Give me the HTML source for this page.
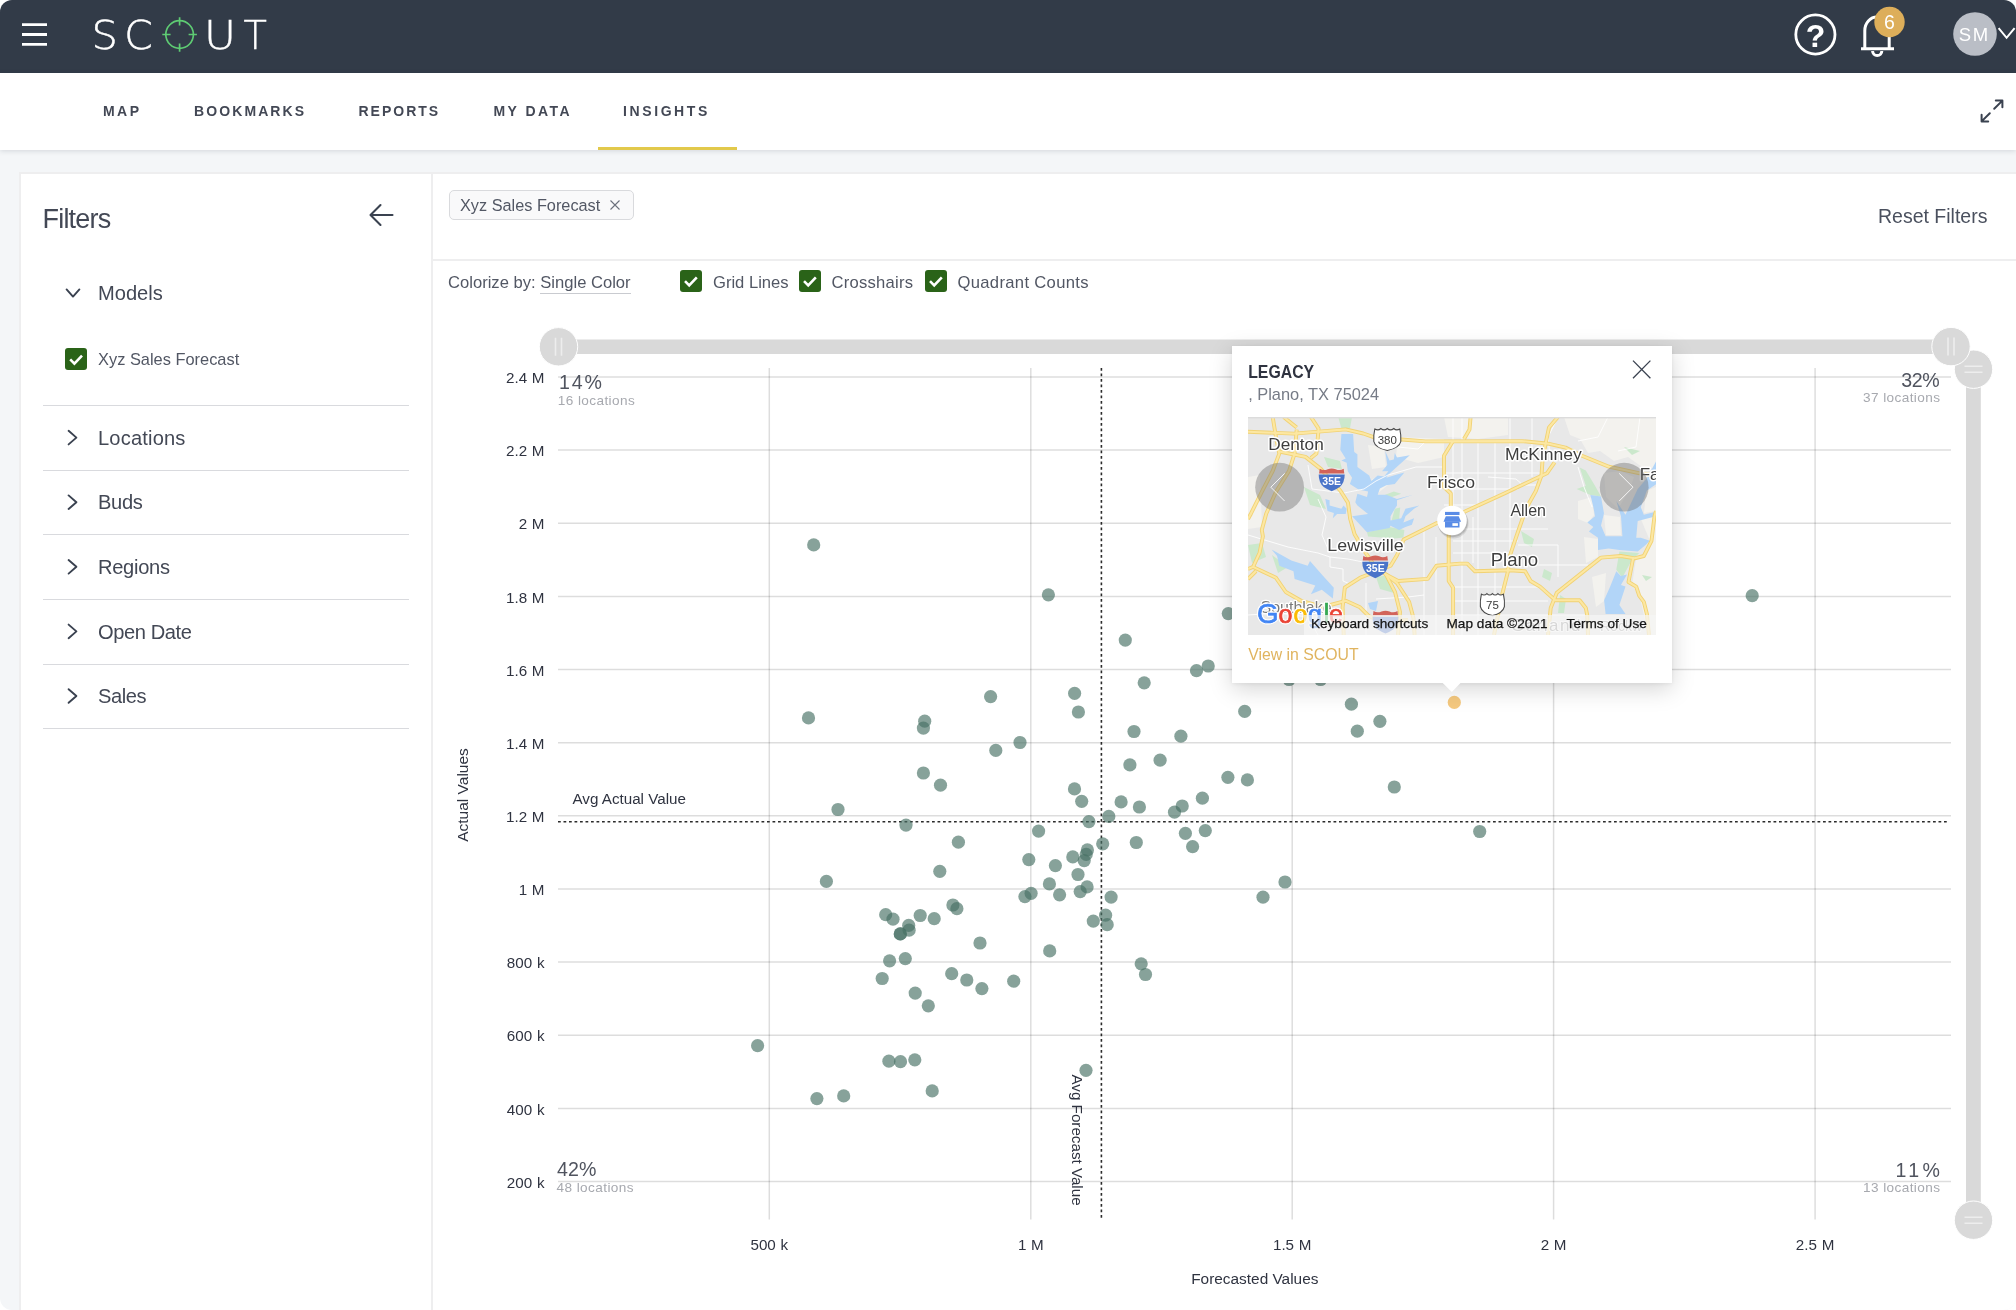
<!DOCTYPE html>
<html lang="en">
<head>
<meta charset="utf-8">
<title>SCOUT Insights</title>
<style>
html,body{margin:0;padding:0;background:#fff;}
body{width:2016px;height:1310px;overflow:hidden;font-family:"Liberation Sans",sans-serif;color:#3b4150;}
#app{position:absolute;left:0;top:0;width:2016px;height:1310px;background:#f4f6f8;border-radius:12px;overflow:hidden;will-change:transform;}
.abs{position:absolute;white-space:nowrap;line-height:1;}
#hdr{position:absolute;left:0;top:0;width:2016px;height:73px;background:#323b48;}
#nav{position:absolute;left:0;top:73px;width:2016px;height:77px;background:#fff;box-shadow:0 1px 5px rgba(40,50,70,.16);}
.nv{position:absolute;top:29.5px;font-weight:700;font-size:14px;letter-spacing:2.45px;color:#434855;line-height:16px;white-space:nowrap;}
#navul{position:absolute;left:598px;top:74px;width:139px;height:3px;background:#e2c94b;}
#lp{position:absolute;left:19px;top:172px;width:410px;height:1150px;background:#fff;border:2px solid #eeeeef;}
#mp{position:absolute;left:431px;top:172px;width:1600px;height:1150px;background:#fff;border:2px solid #eeeeef;}
.sep{position:absolute;left:43px;width:366px;height:1px;background:#d9dade;}
.sec{position:absolute;left:98px;font-size:20.1px;color:#434855;line-height:24px;white-space:nowrap;}
.cb{position:absolute;width:22px;height:22px;border-radius:3px;background:#2a6318;}
.lbl{position:absolute;font-size:16.4px;color:#525764;line-height:20px;white-space:nowrap;}
svg{position:absolute;overflow:visible;}
</style>
</head>
<body>
<div id="app">
<div id="hdr">
<svg width="2016" height="73" viewBox="0 0 2016 73" style="left:0;top:0">
  <g stroke="#fff" stroke-width="2.8" fill="none">
    <path d="M22 24.6H47M22 34.5H47M22 44.3H47"/>
  </g>
  <g font-family="'DejaVu Sans Light','DejaVu Sans',sans-serif" font-weight="200" font-size="38.3" fill="#fff" stroke="#fff" stroke-width=".45">
    <text x="91.6" y="48.7" textLength="26.3" lengthAdjust="spacingAndGlyphs">S</text>
    <text x="124.3" y="48.7" textLength="28.5" lengthAdjust="spacingAndGlyphs">C</text>
    <text x="204.1" y="48.7" textLength="32" lengthAdjust="spacingAndGlyphs">U</text>
    <text x="243.6" y="48.7" textLength="23.4" lengthAdjust="spacingAndGlyphs">T</text>
  </g>
  <g stroke="#5ecb73" stroke-width="1.7" fill="none">
    <circle cx="179.6" cy="34.5" r="13.8"/>
    <path d="M179.6 17.3V25.6M179.6 43.4V51.7M162.3 34.5H170.6M188.6 34.5H196.9"/>
  </g>
  <!-- help -->
  <circle cx="1815.4" cy="34.5" r="19.6" fill="none" stroke="#fff" stroke-width="2.8"/>
  <text x="1815.4" y="46.6" text-anchor="middle" font-family="'Liberation Sans',sans-serif" font-weight="700" font-size="32" fill="#fff">?</text>
  <!-- bell -->
  <g stroke="#fff" stroke-width="3" fill="none">
    <path d="M1864.8 48.8V30.5A12.2 13.6 0 0 1 1889.2 30.5V48.8"/>
    <path d="M1861 48.8H1894"/>
    <path d="M1872.6 51A4.6 4.6 0 0 0 1881.8 51"/>
  </g>
  <circle cx="1889.5" cy="22" r="15.2" fill="#ddae5a"/>
  <text x="1889.5" y="29" text-anchor="middle" font-family="'Liberation Sans',sans-serif" font-size="19.5" fill="#fff">6</text>
  <!-- avatar -->
  <circle cx="1975" cy="34" r="21.8" fill="#babec6"/>
  <text x="1974.2" y="40.6" text-anchor="middle" font-family="'Liberation Sans',sans-serif" font-size="18.5" letter-spacing="1.6" fill="#fff">SM</text>
  <path d="M1998.6 28.2L2006.6 37.8L2014.6 28.2" stroke="#fff" stroke-width="2" fill="none"/>
</svg>
</div>
<div id="nav">
  <div class="nv" style="left:103px">MAP</div>
  <div class="nv" style="left:194px;letter-spacing:2.1px">BOOKMARKS</div>
  <div class="nv" style="left:358.5px;letter-spacing:2px">REPORTS</div>
  <div class="nv" style="left:493.5px">MY DATA</div>
  <div class="nv" style="left:623px;letter-spacing:2.6px">INSIGHTS</div>
  <div id="navul"></div>
  <svg width="26" height="26" viewBox="0 0 26 26" style="left:1979px;top:25px">
    <g stroke="#3a4250" stroke-width="2" fill="none" stroke-linecap="round" stroke-linejoin="round">
      <path d="M15.2 10.8L23.4 2.6M16.8 2.6H23.4V9.2"/>
      <path d="M10.8 15.2L2.6 23.4M2.6 16.8V23.4H9.2"/>
    </g>
  </svg>
</div>
<div id="lp"></div>
<div id="mp"></div>
<div class="abs" style="left:42.5px;top:204px;font-size:27px;letter-spacing:-.8px;line-height:30px;color:#434855">Filters</div>
<svg width="30" height="26" viewBox="0 0 30 26" style="left:366px;top:202px">
  <path d="M26.5 13H5M14.5 3L4.5 13L14.5 23" stroke="#3a4250" stroke-width="2.1" fill="none" stroke-linecap="round" stroke-linejoin="round"/>
</svg>
<svg width="18" height="14" viewBox="0 0 18 14" style="left:64px;top:287px">
  <path d="M2.6 2.4L9 9.6L15.4 2.4" stroke="#3a4250" stroke-width="1.9" fill="none" stroke-linecap="round" stroke-linejoin="round"/>
</svg>
<div class="sec" style="top:281px">Models</div>
<div class="cb" style="left:65px;top:347.5px"><svg width="22" height="22" viewBox="0 0 22 22" style="left:0;top:0"><path d="M5.2 11.4L9.4 15.6L17 7.6" stroke="#fff" stroke-width="2.6" fill="none"/></svg></div>
<div class="lbl" style="left:98px;top:349px">Xyz Sales Forecast</div>
<div class="sep" style="top:405px"></div>
<div class="sep" style="top:469.5px"></div>
<div class="sep" style="top:534px"></div>
<div class="sep" style="top:599px"></div>
<div class="sep" style="top:663.5px"></div>
<div class="sep" style="top:728px"></div>
<div class="sec" style="top:425.5px;letter-spacing:.17px">Locations</div>
<div class="sec" style="top:490px;letter-spacing:-.3px">Buds</div>
<div class="sec" style="top:555px;letter-spacing:-.3px">Regions</div>
<div class="sec" style="top:619.5px;letter-spacing:-.4px">Open Date</div>
<div class="sec" style="top:684px;letter-spacing:-.4px">Sales</div>
<svg width="16" height="340" viewBox="0 0 16 340" style="left:64px;top:424px">
  <g stroke="#3a4250" stroke-width="1.9" fill="none" stroke-linecap="round" stroke-linejoin="round">
    <path d="M4.6 6.8L12.4 13.6L4.6 20.4"/>
    <path d="M4.6 71.4L12.4 78.2L4.6 85"/>
    <path d="M4.6 136L12.4 142.8L4.6 149.6"/>
    <path d="M4.6 200.6L12.4 207.4L4.6 214.2"/>
    <path d="M4.6 265.2L12.4 272L4.6 278.8"/>
  </g>
</svg>
<div style="position:absolute;left:449px;top:190px;width:183px;height:28px;border:1px solid #d9dadd;border-radius:5px;background:#f9f9fa"></div>
<div class="lbl" style="left:460px;top:195.2px;font-size:16.3px">Xyz Sales Forecast</div>
<svg width="12" height="12" viewBox="0 0 12 12" style="left:608.5px;top:198.5px"><path d="M1.5 1.5L10.5 10.5M10.5 1.5L1.5 10.5" stroke="#6b707c" stroke-width="1.1" fill="none"/></svg>
<div class="abs" style="left:1878px;top:205px;font-size:19.5px;line-height:22px;color:#4a505e">Reset Filters</div>
<div style="position:absolute;left:433px;top:259px;width:1584px;height:2px;background:#eeeeef"></div>
<div class="lbl" style="left:448px;top:273px;font-size:16.6px">Colorize by: <span style="border-bottom:1px solid #c9cbd0;padding-bottom:1px">Single Color</span></div>
<div class="cb" style="left:680px;top:270px;width:22px;height:22px"><svg width="22" height="22" viewBox="0 0 22 22" style="left:0;top:0"><path d="M5 11.2L9.2 15.4L16.8 7.4" stroke="#fff" stroke-width="2.6" fill="none"/></svg></div>
<div class="lbl" style="left:713px;top:273px;font-size:16.6px">Grid Lines</div>
<div class="cb" style="left:799px;top:270px;width:22px;height:22px"><svg width="22" height="22" viewBox="0 0 22 22" style="left:0;top:0"><path d="M5 11.2L9.2 15.4L16.8 7.4" stroke="#fff" stroke-width="2.6" fill="none"/></svg></div>
<div class="lbl" style="left:831.5px;top:273px;font-size:16.6px;letter-spacing:.25px">Crosshairs</div>
<div class="cb" style="left:925px;top:270px;width:22px;height:22px"><svg width="22" height="22" viewBox="0 0 22 22" style="left:0;top:0"><path d="M5 11.2L9.2 15.4L16.8 7.4" stroke="#fff" stroke-width="2.6" fill="none"/></svg></div>
<div class="lbl" style="left:957.5px;top:273px;font-size:16.6px;letter-spacing:.33px">Quadrant Counts</div>
<svg width="2016" height="1310" viewBox="0 0 2016 1310" style="left:0;top:0" font-family="'Liberation Sans',sans-serif">
<rect x="558" y="339.5" width="1393" height="14.5" fill="#d9d9d9"/>
<rect x="1966" y="369" width="14.8" height="851" fill="#d9d9d9"/>
<g stroke="#000" stroke-opacity=".135" stroke-width="1.5">
<path d="M558 377.0H1951"/>
<path d="M558 450.1H1951"/>
<path d="M558 523.3H1951"/>
<path d="M558 596.4H1951"/>
<path d="M558 669.6H1951"/>
<path d="M558 742.7H1951"/>
<path d="M558 815.8H1951"/>
<path d="M558 889.0H1951"/>
<path d="M558 962.1H1951"/>
<path d="M558 1035.3H1951"/>
<path d="M558 1108.4H1951"/>
<path d="M558 1181.5H1951"/>
<path d="M769.3 368V1219.5"/>
<path d="M1030.8 368V1219.5"/>
<path d="M1292.2 368V1219.5"/>
<path d="M1553.6 368V1219.5"/>
<path d="M1815.1 368V1219.5"/>
</g>
<g stroke="#2b2b2b" stroke-width="1.6" stroke-dasharray="2.75 2.75" fill="none"><path d="M558 821.8H1949"/><path d="M1101.4 368V1219"/></g>
<g font-size="15.2" fill="#2f3340">
<text x="544.5" y="383.1" text-anchor="end" word-spacing="0.5">2.4 M</text>
<text x="544.5" y="456.2" text-anchor="end" word-spacing="0.5">2.2 M</text>
<text x="544.5" y="529.4" text-anchor="end" word-spacing="0.5">2 M</text>
<text x="544.5" y="602.5" text-anchor="end" word-spacing="0.5">1.8 M</text>
<text x="544.5" y="675.7" text-anchor="end" word-spacing="0.5">1.6 M</text>
<text x="544.5" y="748.8" text-anchor="end" word-spacing="0.5">1.4 M</text>
<text x="544.5" y="821.9" text-anchor="end" word-spacing="0.5">1.2 M</text>
<text x="544.5" y="895.1" text-anchor="end" word-spacing="0.5">1 M</text>
<text x="544.5" y="968.2" text-anchor="end" word-spacing="0.5">800 k</text>
<text x="544.5" y="1041.4" text-anchor="end" word-spacing="0.5">600 k</text>
<text x="544.5" y="1114.5" text-anchor="end" word-spacing="0.5">400 k</text>
<text x="544.5" y="1187.6" text-anchor="end" word-spacing="0.5">200 k</text>
<text x="769.3" y="1249.6" text-anchor="middle" word-spacing="0.5">500 k</text>
<text x="1030.8" y="1249.6" text-anchor="middle" word-spacing="0.5">1 M</text>
<text x="1292.2" y="1249.6" text-anchor="middle" word-spacing="0.5">1.5 M</text>
<text x="1553.6" y="1249.6" text-anchor="middle" word-spacing="0.5">2 M</text>
<text x="1815.1" y="1249.6" text-anchor="middle" word-spacing="0.5">2.5 M</text>
<text x="1254.8" y="1283.7" text-anchor="middle" font-size="15.4">Forecasted Values</text>
<text transform="translate(467.8 795) rotate(-90)" text-anchor="middle" font-size="15.5">Actual Values</text>
<text x="572.5" y="803.6" font-size="15.2">Avg Actual Value</text>
<text transform="translate(1071.8 1074.5) rotate(90)" font-size="15.2">Avg Forecast Value</text>
</g>
<g font-size="19.6" fill="#50545f">
<text x="559" y="389.4" textLength="43" lengthAdjust="spacing">14%</text>
<text x="1901.3" y="386.8" textLength="38.5" lengthAdjust="spacing">32%</text>
<text x="557" y="1176.3" textLength="39.4" lengthAdjust="spacing">42%</text>
<text x="1895.4" y="1176.5" textLength="44.6" lengthAdjust="spacing">11%</text>
</g>
<g font-size="13.6" fill="#a7a9af" letter-spacing=".4">
<text x="557.8" y="404.5">16 locations</text>
<text x="1940.4" y="401.8" text-anchor="end">37 locations</text>
<text x="556.6" y="1191.8">48 locations</text>
<text x="1940.4" y="1191.6" text-anchor="end">13 locations</text>
</g>
<g fill="#467064" fill-opacity=".65">
<circle cx="813.7" cy="544.9" r="6.6"/>
<circle cx="1048.4" cy="594.8" r="6.6"/>
<circle cx="990.6" cy="696.6" r="6.6"/>
<circle cx="1074.6" cy="693.3" r="6.6"/>
<circle cx="1078.4" cy="712.0" r="6.6"/>
<circle cx="808.5" cy="717.9" r="6.6"/>
<circle cx="924.7" cy="721.2" r="6.6"/>
<circle cx="923.4" cy="728.1" r="6.6"/>
<circle cx="1020" cy="742.5" r="6.6"/>
<circle cx="995.8" cy="750.4" r="6.6"/>
<circle cx="923.4" cy="773.0" r="6.6"/>
<circle cx="940.5" cy="785.2" r="6.6"/>
<circle cx="1074.5" cy="788.9" r="6.6"/>
<circle cx="1081.7" cy="801.3" r="6.6"/>
<circle cx="1129.9" cy="764.9" r="6.6"/>
<circle cx="1160.1" cy="760.2" r="6.6"/>
<circle cx="1227.9" cy="777.3" r="6.6"/>
<circle cx="1121.1" cy="801.9" r="6.6"/>
<circle cx="1139.4" cy="807.0" r="6.6"/>
<circle cx="1202.4" cy="798.2" r="6.6"/>
<circle cx="1182.2" cy="806.0" r="6.6"/>
<circle cx="1174.5" cy="812.2" r="6.6"/>
<circle cx="838" cy="809.5" r="6.6"/>
<circle cx="1108.8" cy="816.4" r="6.6"/>
<circle cx="1088.9" cy="821.6" r="6.6"/>
<circle cx="906" cy="825.1" r="6.6"/>
<circle cx="1038.6" cy="831.1" r="6.6"/>
<circle cx="1185.4" cy="833.3" r="6.6"/>
<circle cx="1205.3" cy="830.6" r="6.6"/>
<circle cx="1192.6" cy="846.7" r="6.6"/>
<circle cx="958.4" cy="842.2" r="6.6"/>
<circle cx="1102.7" cy="843.8" r="6.6"/>
<circle cx="1136.3" cy="842.5" r="6.6"/>
<circle cx="1087.4" cy="849.9" r="6.6"/>
<circle cx="1086.2" cy="854.4" r="6.6"/>
<circle cx="1084.2" cy="860.6" r="6.6"/>
<circle cx="1072.8" cy="856.9" r="6.6"/>
<circle cx="1028.8" cy="859.6" r="6.6"/>
<circle cx="1055.4" cy="865.6" r="6.6"/>
<circle cx="939.8" cy="871.3" r="6.6"/>
<circle cx="1078" cy="874.5" r="6.6"/>
<circle cx="826.4" cy="881.4" r="6.6"/>
<circle cx="1049.4" cy="883.9" r="6.6"/>
<circle cx="1087.1" cy="886.9" r="6.6"/>
<circle cx="1080.2" cy="891.6" r="6.6"/>
<circle cx="1031.1" cy="893.3" r="6.6"/>
<circle cx="1024.9" cy="896.6" r="6.6"/>
<circle cx="1059.6" cy="894.8" r="6.6"/>
<circle cx="1111.1" cy="897.1" r="6.6"/>
<circle cx="952.9" cy="905" r="6.6"/>
<circle cx="956.9" cy="908.7" r="6.6"/>
<circle cx="885.7" cy="914.7" r="6.6"/>
<circle cx="893" cy="919.2" r="6.6"/>
<circle cx="920.2" cy="915.5" r="6.6"/>
<circle cx="934.2" cy="918.7" r="6.6"/>
<circle cx="1105.6" cy="915.2" r="6.6"/>
<circle cx="1093.3" cy="921.1" r="6.6"/>
<circle cx="1107.2" cy="924.7" r="6.6"/>
<circle cx="908.7" cy="925.4" r="6.6"/>
<circle cx="909.1" cy="930.2" r="6.6"/>
<circle cx="900.3" cy="933.9" r="6.6"/>
<circle cx="900.3" cy="933.9" r="6.6"/>
<circle cx="980" cy="943" r="6.6"/>
<circle cx="1049.7" cy="950.9" r="6.6"/>
<circle cx="889.6" cy="960.8" r="6.6"/>
<circle cx="905.3" cy="958.6" r="6.6"/>
<circle cx="1141.2" cy="963.8" r="6.6"/>
<circle cx="1145.5" cy="974.5" r="6.6"/>
<circle cx="882.2" cy="978.5" r="6.6"/>
<circle cx="951.7" cy="973.7" r="6.6"/>
<circle cx="966.8" cy="980" r="6.6"/>
<circle cx="981.9" cy="988.6" r="6.6"/>
<circle cx="1013.7" cy="981.2" r="6.6"/>
<circle cx="915.2" cy="993.1" r="6.6"/>
<circle cx="928.3" cy="1005.8" r="6.6"/>
<circle cx="757.6" cy="1045.7" r="6.6"/>
<circle cx="888.9" cy="1061.2" r="6.6"/>
<circle cx="900.5" cy="1061.7" r="6.6"/>
<circle cx="914.8" cy="1059.8" r="6.6"/>
<circle cx="1086" cy="1070.3" r="6.6"/>
<circle cx="816.9" cy="1098.6" r="6.6"/>
<circle cx="843.7" cy="1095.9" r="6.6"/>
<circle cx="932.2" cy="1090.9" r="6.6"/>
<circle cx="1228.3" cy="613.6" r="6.6"/>
<circle cx="1125.3" cy="640.1" r="6.6"/>
<circle cx="1208.2" cy="666" r="6.6"/>
<circle cx="1196.5" cy="670.7" r="6.6"/>
<circle cx="1144.2" cy="682.8" r="6.6"/>
<circle cx="1289.1" cy="679.5" r="6.6"/>
<circle cx="1320.6" cy="679.5" r="6.6"/>
<circle cx="1244.7" cy="711.4" r="6.6"/>
<circle cx="1351.4" cy="704.2" r="6.6"/>
<circle cx="1379.9" cy="721.3" r="6.6"/>
<circle cx="1357.3" cy="731.2" r="6.6"/>
<circle cx="1134" cy="731.5" r="6.6"/>
<circle cx="1180.9" cy="736.2" r="6.6"/>
<circle cx="1247.4" cy="779.9" r="6.6"/>
<circle cx="1394.3" cy="787" r="6.6"/>
<circle cx="1479.7" cy="831.5" r="6.6"/>
<circle cx="1285" cy="882" r="6.6"/>
<circle cx="1263" cy="897.2" r="6.6"/>
<circle cx="1752.2" cy="595.7" r="6.6"/>
</g>
<circle cx="1454.3" cy="702.4" r="6.6" fill="#f5c97f"/>
<circle cx="1973.5" cy="369.2" r="19.2" fill="#d9d9d9" stroke="#fff" stroke-width="1"/><path d="M1964.5 366.2H1982.5M1964.5 372.2H1982.5" stroke="#ededed" stroke-width="1.6"/>
<circle cx="1973.5" cy="1220.2" r="19.2" fill="#d9d9d9" stroke="#fff" stroke-width="1"/><path d="M1964.5 1217.2H1982.5M1964.5 1223.2H1982.5" stroke="#ededed" stroke-width="1.6"/>
<circle cx="558.5" cy="346.8" r="19.2" fill="#d9d9d9" stroke="#fff" stroke-width="1"/><path d="M555.5 337.8V355.8M561.5 337.8V355.8" stroke="#ededed" stroke-width="1.6"/>
<circle cx="1951" cy="346.6" r="19.2" fill="#d9d9d9" stroke="#fff" stroke-width="1"/><path d="M1948 337.6V355.6M1954 337.6V355.6" stroke="#ededed" stroke-width="1.6"/>
</svg>
<div style="position:absolute;left:1232px;top:346px;width:440px;height:337px;background:#fff;box-shadow:0 6px 22px rgba(0,0,0,.17),0 1px 4px rgba(0,0,0,.06)"></div>
<svg width="440" height="350" viewBox="0 0 440 350" style="left:1232px;top:346px" font-family="'Liberation Sans',sans-serif">
  <path d="M210.2 336.5H229L219.8 346Z" fill="#fff"/>
  <text x="16.2" y="31.9" font-size="18.6" font-weight="700" fill="#2f3340" textLength="66" lengthAdjust="spacingAndGlyphs">LEGACY</text>
  <text x="16.2" y="54.2" font-size="16.4" fill="#767b86">, Plano, TX 75024</text>
  <path d="M401 14.6L418.4 32.2M418.4 14.6L401 32.2" stroke="#3a4250" stroke-width="1.3" fill="none"/>
  <text x="16.2" y="313.7" font-size="16.6" fill="#e0b45f" textLength="110.5" lengthAdjust="spacingAndGlyphs">View in SCOUT</text>
</svg>
<svg width="408" height="218" viewBox="0 0 408 218" style="left:1248px;top:417px;overflow:hidden" font-family="'Liberation Sans',sans-serif">
  <rect width="408" height="218" fill="#e8e8e8"/>
  <!-- lighter land -->
  <g fill="#f3f2ee">
    <path d="M316 0H408V52L394 50L380 40L366 44L352 34L340 36L332 22L322 18Z"/>
    <path d="M356 56L372 54L386 60L382 72L370 92L358 80Z"/>
    <path d="M398 74L408 70V94L396 96Z"/>
    <path d="M392 100H408V218H400L392 180L384 168L388 142L398 138L402 124Z"/>
    <path d="M356 98L372 100L373 118H358Z"/>
    <path d="M330 84L344 80L346 98L340 106L330 102Z"/>
    <path d="M336 120L350 122V140L338 146Z"/>
    <path d="M344 160L358 156L356 184L348 190Z"/>
    <path d="M150 20L196 22V40L170 46L148 40Z"/>
    <path d="M0 60L12 58L14 110L0 112Z"/>
    <path d="M120 28L136 30L138 50L124 52Z"/>
    <path d="M196 0H260V18L230 22L200 20Z"/>
    <path d="M124 62L134 60L140 68L130 76L122 72Z"/>
  </g>
  <!-- parks -->
  <g fill="#cbe8cc">
    <path d="M90.2 0H104.1L101.9 11.6H93.4Z"/>
    <path d="M76 40L92 44L94 52L80 50Z"/>
    <path d="M56 70L72 78L78 92L62 88Z"/>
    <path d="M119 115.2L141.5 109.9L156.4 113.1L155.4 120.6L146.8 121.6L120.1 119.5Z"/>
    <path d="M137.2 77.8L145.8 74.6L153.2 76.8L141.5 81Z"/>
    <path d="M146.8 91.7L152.2 90.6L151.1 102.4L143.6 103.5Z"/>
    <path d="M0 128L14 126L18 140L4 146Z"/>
    <path d="M24 138L40 150L30 156Z"/>
    <path d="M128 160L142 158L146 176L132 172Z"/>
    <path d="M331.7 50.5L337.8 53.5L347 68.8L353 79.5L342.4 78L328.6 71.9L337.8 68.8Z"/>
    <path d="M371.4 134.5L391.2 136L383.6 143.6L374.4 160.4L368.3 152.8Z"/>
    <path d="M273 114L286 122L284 130L276 126Z"/>
    <path d="M296 152L304 156L302 164L294 160Z"/>
    <path d="M312 178L318 182L316 196L310 196Z"/>
    <path d="M394 158L404 160L398 164Z"/>
    <path d="M376 30L392 34L384 38Z"/>
  </g>
  <!-- water -->
  <g fill="#b2d5f8">
    <!-- Lewisville Lake -->
    <path d="M93.4 16.9H105.1L106.2 35.1L109.4 37.2V50L121.2 58.6L123.3 63.9L129.7 58.6L136.1 59.6L140.4 54.3H134L139.3 47.9L137.2 34L141.5 43.6L145.8 42.5L146.8 36.1L149 40.4L161.8 38.3L140.4 57.5L138.3 60.7L149 57.5L156.4 55.4L151.1 61.8L146.8 67.1L138.3 68.2L131.9 71.4L129.7 77.8H138.3L149 82.1L165 77.8L149 83.2V88.5L146.8 91.7L142.5 99.2V103.5L153.2 101.3L157.5 91.7L171.4 88.5L166.1 91.7L157.5 99.2L155.4 105.6L166.1 101.3L163.9 107.7L157.5 109.9L151.1 113.1L142.5 108.8L141.5 111L119 115.2L104.1 99.2L120.1 97.1L109.4 88.5L107.3 85.3L109.4 76.8L119 80L120.1 74.6L110.5 72.5L101.9 67.1L104.1 60.7L99.8 54.3L98.7 45.8L93.4 43.6L97.7 41.5L92.3 32.9Z"/>
    <path d="M77.3 82.1L81.6 83.2V88.5L93.4 91.7L95.5 88.5L98.7 91.7L97.7 97.1H89.1L84.8 101.3L85.9 96L79.5 93.9Z"/>
    <!-- Grapevine Lake -->
    <path d="M23.6 132.5L43.3 143.4L59.7 148.8L62 144L74.9 158.7L85.8 170.7L84.8 181.6L73.8 172.8L62.9 177.2L67.3 168.5L46.6 161.9L45.5 154.3L31.3 148.8L29.1 139Z"/>
    <path d="M120 186L130 184L128 194L122 192Z"/>
    <!-- Lavon Lake -->
    <path d="M342.4 78L353 79.5L356 96.3L353 108.5L357.6 119.2H374.4L373 99.3L368.3 84L377.5 97.8L389.7 71.9L398.9 61.2L408 44.4V67.3L398.9 73.4L392.8 90.2L395.8 97.8L408 94.8V99.3L389.7 103.9L388.2 120.7H392.8L401.9 123.8L397.3 128.3L389.7 134.5L371.4 132.9L360.7 131.4L350 132.9V120.7L340.9 114.6L345.4 110L339.3 105.4L347 99.3L345.4 90.2Z"/>
    <!-- Ray Hubbard -->
    <path d="M368.3 154.3L372.9 158.9L379 157.4L372.9 168L377.5 169.6L371.4 187.9L377.5 197H357.6L356.1 183.3L362.2 169.6Z"/>
  </g>
  <!-- minor roads -->
  <g stroke="#fff" stroke-width=".95" stroke-opacity=".9" fill="none">
    <path d="M205 0V100M214 0V218M230 24V218M247 24V218M262 0V150M284 0V60M196 56H293M196 72H270M196 88H230M205 112H300M205 124H270M205 136H262M205 170H290M205 184H300M205 198H340M188 120V218M176 110V218M225 100V146"/>
    <path d="M270 128H310V160M290 148H340M240 60L268 62L275 68H290"/>
    <path d="M60 48L64 72L96 76L116 72L128 64L140 58L168 50L196 50"/>
    <path d="M0 118L20 124L40 130L70 136L82 140V150L95 152V164L104 168"/>
    <path d="M82 140L100 142L120 146M118 166V218M128 182L160 180L176 178M70 82L78 100L74 118L80 132"/>
    <path d="M310 0L300 20L302 40M330 50L336 70L344 90M360 0L350 20L330 24M392 0L388 30L370 34"/>
    <path d="M0 198L30 196L60 200L70 218M150 30L170 32L178 24"/>
  </g>
  <g stroke="#f1d274" stroke-width="3.9" fill="none" stroke-linejoin="round">
      <!-- US 380 -->
      <path d="M0 14.8L46 16.6L70.6 14.6L97.8 12.4L115.3 16.5L126.2 20.3L153.5 22.5L177.5 24.4L273.8 24.1L301 26.8L317.5 30.6L333.9 38.8L361 49.7L391.7 56.3L408 58.5"/>
      <!-- I-35W / Denton west -->
      <path d="M24.7 0L28 20.3L31.3 36.6L24.7 54L13.8 74.8L2.9 96.7L0 102"/>
      <path d="M48.7 12.6L46.6 36.6L41 54L28 74.8L18.2 96.7L13.8 113L14.9 119.4L11.6 135.7L5.1 149.9L0 152"/>
      <path d="M35.6 0L48.7 10.5M62.9 0L70.6 11.6L68.4 36.6L62.9 41"/>
      <!-- I-35E -->
      <path d="M31.3 34.5L57.5 39.9L72.8 51.9L92.4 73.8L100 85.8L102.2 102L106.6 117.2L117.5 135.7L127.3 149.9L138.2 157.6L149.1 166.3L161.1 184.8L165.5 201.2L166.6 218"/>
      <!-- DNT -->
      <path d="M204.8 24.5L196 38.8V70L202.8 76.5V100"/>
      <path d="M200.7 108V164L205.1 170.7V218"/>
      <path d="M222.6 0L221.5 12.6L216 22"/>
      <!-- US 75 -->
      <path d="M309.9 0L301 10.5L297.8 25.7L294.6 42L293.5 58.5L288 73.7L278.2 91.2L270.6 113L268.4 119.4L261.8 139L259.7 155.4L254.2 177.2L250 198L246 218"/>
      <!-- SH 121 -->
      <path d="M306.6 45.4L298.9 56.3L257.5 75.9L217 94.5L204 104L188.4 106.3L155.7 122.6L149.1 137.9L142.6 148.8L112 160.8L96.8 170.7L94.6 190.3L95.7 218"/>
      <!-- PGBT -->
      <path d="M138.2 157.6L150.2 164L179.7 161.9L188.4 148.8L212 146.6H219.3L226.9 154.3L261.8 153.2L277.1 154.3L282.6 164L292 169.6L307.3 183.3H331.7L337.8 191L339.3 198.6L340 218"/>
      <!-- SH 78 -->
      <path d="M300 218L302.7 191L308.8 175.7L353 140.6L372.9 139L386.7 141.3L395.8 139L403.5 123.8L406.5 99.3L408 94"/>
      <path d="M385.1 141.3L380.5 165L388.2 169.6L391.2 178.7L395.8 184.8L398.9 197L401 218"/>
      <!-- SW roads -->
      <path d="M5.1 149.9L28 160.8L37.8 175L53.1 183.8L75 190L97.8 183.8L112 190.3L120.8 199L135 205L160 203"/>
      <path d="M0 162L8 154"/>
      <path d="M138 157.6L147 175L152 195L150 218"/>
  </g>
  <g stroke="#fce7a2" stroke-width="2.1" fill="none" stroke-linejoin="round">
      <!-- US 380 -->
      <path d="M0 14.8L46 16.6L70.6 14.6L97.8 12.4L115.3 16.5L126.2 20.3L153.5 22.5L177.5 24.4L273.8 24.1L301 26.8L317.5 30.6L333.9 38.8L361 49.7L391.7 56.3L408 58.5"/>
      <!-- I-35W / Denton west -->
      <path d="M24.7 0L28 20.3L31.3 36.6L24.7 54L13.8 74.8L2.9 96.7L0 102"/>
      <path d="M48.7 12.6L46.6 36.6L41 54L28 74.8L18.2 96.7L13.8 113L14.9 119.4L11.6 135.7L5.1 149.9L0 152"/>
      <path d="M35.6 0L48.7 10.5M62.9 0L70.6 11.6L68.4 36.6L62.9 41"/>
      <!-- I-35E -->
      <path d="M31.3 34.5L57.5 39.9L72.8 51.9L92.4 73.8L100 85.8L102.2 102L106.6 117.2L117.5 135.7L127.3 149.9L138.2 157.6L149.1 166.3L161.1 184.8L165.5 201.2L166.6 218"/>
      <!-- DNT -->
      <path d="M204.8 24.5L196 38.8V70L202.8 76.5V100"/>
      <path d="M200.7 108V164L205.1 170.7V218"/>
      <path d="M222.6 0L221.5 12.6L216 22"/>
      <!-- US 75 -->
      <path d="M309.9 0L301 10.5L297.8 25.7L294.6 42L293.5 58.5L288 73.7L278.2 91.2L270.6 113L268.4 119.4L261.8 139L259.7 155.4L254.2 177.2L250 198L246 218"/>
      <!-- SH 121 -->
      <path d="M306.6 45.4L298.9 56.3L257.5 75.9L217 94.5L204 104L188.4 106.3L155.7 122.6L149.1 137.9L142.6 148.8L112 160.8L96.8 170.7L94.6 190.3L95.7 218"/>
      <!-- PGBT -->
      <path d="M138.2 157.6L150.2 164L179.7 161.9L188.4 148.8L212 146.6H219.3L226.9 154.3L261.8 153.2L277.1 154.3L282.6 164L292 169.6L307.3 183.3H331.7L337.8 191L339.3 198.6L340 218"/>
      <!-- SH 78 -->
      <path d="M300 218L302.7 191L308.8 175.7L353 140.6L372.9 139L386.7 141.3L395.8 139L403.5 123.8L406.5 99.3L408 94"/>
      <path d="M385.1 141.3L380.5 165L388.2 169.6L391.2 178.7L395.8 184.8L398.9 197L401 218"/>
      <!-- SW roads -->
      <path d="M5.1 149.9L28 160.8L37.8 175L53.1 183.8L75 190L97.8 183.8L112 190.3L120.8 199L135 205L160 203"/>
      <path d="M0 162L8 154"/>
      <path d="M138 157.6L147 175L152 195L150 218"/>
  </g>
  <!-- place labels -->
  <g fill="#3e3e3e" stroke="#fff" stroke-width="3" stroke-linejoin="round" paint-order="stroke" font-size="17">
    <text x="20.2" y="32.8" textLength="55.6" lengthAdjust="spacingAndGlyphs">Denton</text>
    <text x="256.9" y="42.7" textLength="77" lengthAdjust="spacingAndGlyphs">McKinney</text>
    <text x="179" y="71" textLength="48" lengthAdjust="spacingAndGlyphs">Frisco</text>
    <text x="262.4" y="99.4" textLength="35.6" lengthAdjust="spacingAndGlyphs">Allen</text>
    <text x="391.7" y="62.8">Fa</text>
    <text x="79.3" y="133.6" textLength="76.4" lengthAdjust="spacingAndGlyphs">Lewisville</text>
    <text x="242.7" y="149.4" font-size="19" textLength="47.5" lengthAdjust="spacingAndGlyphs">Plano</text>
    <text x="12.6" y="196" font-size="16.5" fill="#7a7a7a" stroke-width="2.4" textLength="71" lengthAdjust="spacingAndGlyphs">Southlake</text>
    <text x="263" y="214" font-size="17" fill="#8a8a8a" stroke-width="2" letter-spacing="1.5">Garland</text>
    <text x="352" y="214" font-size="14" fill="#9a9a9a" stroke-width="2">Rockw</text>
  </g>
  <!-- shields -->
  <g font-weight="700" font-size="10.5" text-anchor="middle">
    <g transform="translate(139.3 22.5)">
      <path d="M-12.5 -10.5Q-9 -8.5 -6.5 -11Q-3 -8.2 0 -11Q3 -8.2 6.5 -11Q9 -8.5 12.5 -10.5Q14 -4 13.5 2Q12 8.5 0 11Q-12 8.5 -13.5 2Q-14 -4 -12.5 -10.5Z" fill="#fff" stroke="#4a4a4a" stroke-width="1.1"/>
      <text x="0" y="4" fill="#3a3a3a" font-weight="400" font-size="11.5">380</text>
    </g>
    <g transform="translate(244.4 187.6)">
      <path d="M-11 -10.5Q-8 -8.5 -5.5 -11Q-2.8 -8.2 0 -11Q2.8 -8.2 5.5 -11Q8 -8.5 11 -10.5Q12.5 -4 12 2Q10.5 8.5 0 11Q-10.5 8.5 -12 2Q-12.5 -4 -11 -10.5Z" fill="#fff" stroke="#4a4a4a" stroke-width="1.1"/>
      <text x="0" y="4.4" fill="#3a3a3a" font-weight="400" font-size="11.5">75</text>
    </g>
    <g transform="translate(83.7 62.8)">
      <path d="M-13 -5.2H13Q13 3 8 7.2Q4 10 0 11.4Q-4 10 -8 7.2Q-13 3 -13 -5.2Z" fill="#4a74c9"/>
      <path d="M-12.6 -6.4Q-12.2 -9 -12 -11Q-8 -8.6 -4 -10.6Q0 -12 4 -10.6Q8 -8.6 12 -11Q12.2 -9 12.6 -6.4Z" fill="#d2635a"/>
      <text x="0" y="4.8" fill="#fff">35E</text>
    </g>
    <g transform="translate(127.3 149.9)">
      <path d="M-13 -5.2H13Q13 3 8 7.2Q4 10 0 11.4Q-4 10 -8 7.2Q-13 3 -13 -5.2Z" fill="#4a74c9"/>
      <path d="M-12.6 -6.4Q-12.2 -9 -12 -11Q-8 -8.6 -4 -10.6Q0 -12 4 -10.6Q8 -8.6 12 -11Q12.2 -9 12.6 -6.4Z" fill="#d2635a"/>
      <text x="0" y="4.8" fill="#fff">35E</text>
    </g>
    <g transform="translate(137.5 205)">
      <path d="M-13 -5.2H13Q13 3 8 7.2Q4 10 0 11.4Q-4 10 -8 7.2Q-13 3 -13 -5.2Z" fill="#4a74c9"/>
      <path d="M-12.6 -6.4Q-12.2 -9 -12 -11Q-8 -8.6 -4 -10.6Q0 -12 4 -10.6Q8 -8.6 12 -11Q12.2 -9 12.6 -6.4Z" fill="#d2635a"/>
    </g>
  </g>
  <!-- marker -->
  <circle cx="205.2" cy="106" r="15.4" fill="#000" fill-opacity=".10"/>
  <circle cx="204.8" cy="105.2" r="15" fill="#000" fill-opacity=".14"/>
  <circle cx="204" cy="103.5" r="14.8" fill="#fff"/>
  <g fill="#5a8ce6">
    <rect x="197" y="94.9" width="14.5" height="3.1"/>
    <path d="M197.8 99.3H210.7L213.1 104.8H195.5Z"/>
    <rect x="197" y="104.4" width="14.5" height="6.1"/>
  </g>
  <rect x="204.4" y="106.2" width="5.5" height="2.7" fill="#fff"/>
  <!-- google logo -->
  <g stroke="#fff" stroke-width="3" stroke-linejoin="round" fill="#fff">
    <text x="9" y="205.8" font-size="27.6" >G</text>
    <text x="30.6" y="205.8" font-size="25" >o</text>
    <text x="45.4" y="205.8" font-size="25" >o</text>
    <text x="60" y="205.8" font-size="25" >g</text>
    <text x="75.4" y="205.8" font-size="27" >l</text>
    <text x="81" y="205.8" font-size="25" >e</text>
  </g>
  <g stroke-width=".7">
    <text x="9" y="205.8" font-size="27.6" fill="#4285f4" stroke="#4285f4">G</text>
    <text x="30.6" y="205.8" font-size="25" fill="#ea4335" stroke="#ea4335">o</text>
    <text x="45.4" y="205.8" font-size="25" fill="#fbbc05" stroke="#fbbc05">o</text>
    <text x="60" y="205.8" font-size="25" fill="#4285f4" stroke="#4285f4">g</text>
    <text x="75.4" y="205.8" font-size="27" fill="#34a853" stroke="#34a853">l</text>
    <text x="81" y="205.8" font-size="25" fill="#ea4335" stroke="#ea4335">e</text>
  </g>
  <!-- attribution strip -->
  <rect x="56" y="198" width="352" height="20" fill="#f5f5f5" fill-opacity=".72"/>
  <g font-size="13.6" fill="#151515" stroke="#151515" stroke-width=".25">
    <text x="62.9" y="211" textLength="117.3" lengthAdjust="spacingAndGlyphs">Keyboard shortcuts</text>
    <text x="198.5" y="211" textLength="101" lengthAdjust="spacingAndGlyphs">Map data ©2021</text>
    <text x="318.6" y="211" textLength="80.2" lengthAdjust="spacingAndGlyphs">Terms of Use</text>
  </g>
  <!-- carousel buttons -->
  <circle cx="31.6" cy="70.2" r="24.4" fill="#6e6e6e" fill-opacity=".42"/>
  <path d="M36.6 56.4L22.8 70.2L36.6 84" stroke="#fff" stroke-opacity=".85" stroke-width="1" fill="none"/>
  <circle cx="376.2" cy="70.2" r="24.4" fill="#6e6e6e" fill-opacity=".42"/>
  <path d="M371.2 56.4L385 70.2L371.2 84" stroke="#fff" stroke-opacity=".85" stroke-width="1" fill="none"/>
  <rect x="0" y="0" width="408" height="1.4" fill="#dcdcdc"/>
</svg>
</div>
</body>
</html>
